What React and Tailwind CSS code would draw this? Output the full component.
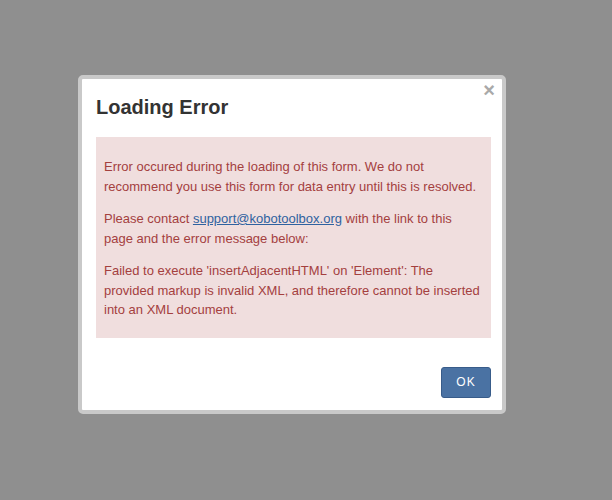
import React from 'react';

const font = { fontFamily: '"Liberation Sans", Arial, Helvetica, sans-serif' };

const LoadingErrorModal = () => {
  return (
    <div className="w-[428px] rounded-[5px] border-4 border-[#c9c9c9] bg-white">
      <div className="relative px-[14px] pt-[17px] pb-[12px]">
        <button className="absolute right-[7px] top-[1px] text-[20px] font-bold leading-none text-[#a9a9a9]">×</button>
        <h2 className="text-[20px] font-bold leading-[22px] text-[#333333]">Loading Error</h2>
        <div className="mt-[19px] w-[395px] bg-[#f0dede] pt-5 pb-[18px] pl-2 pr-[11px] text-[13px] leading-[19.5px] text-[#a4403e]">
          <p className="mb-[13px]">
            Error occured during the loading of this form. We do not recommend you use this form for data entry until this is resolved.
          </p>
          <p className="mb-[13px]">
            Please contact{' '}
            <a href="#" className="text-[#2f62a0] underline">support@kobotoolbox.org</a>{' '}
            with the link to this page and the error message below:
          </p>
          <p>
            Failed to execute 'insertAdjacentHTML' on 'Element': The provided markup is invalid XML, and therefore cannot be inserted into an XML document.
          </p>
        </div>
        <div className="mt-[29px] flex w-[395px] justify-end">
          <button className="h-[31px] w-[50px] rounded-[3px] border border-[#385c8a] bg-[#4a72a3] text-[12px] tracking-[1px] text-white">
            OK
          </button>
        </div>
      </div>
    </div>
  );
};

export default function App() {
  return (
    <div className="flex h-[500px] w-full items-start bg-[#8f8f8f] pl-[78px] pt-[75px]" style={font}>
      <LoadingErrorModal />
    </div>
  );
}
